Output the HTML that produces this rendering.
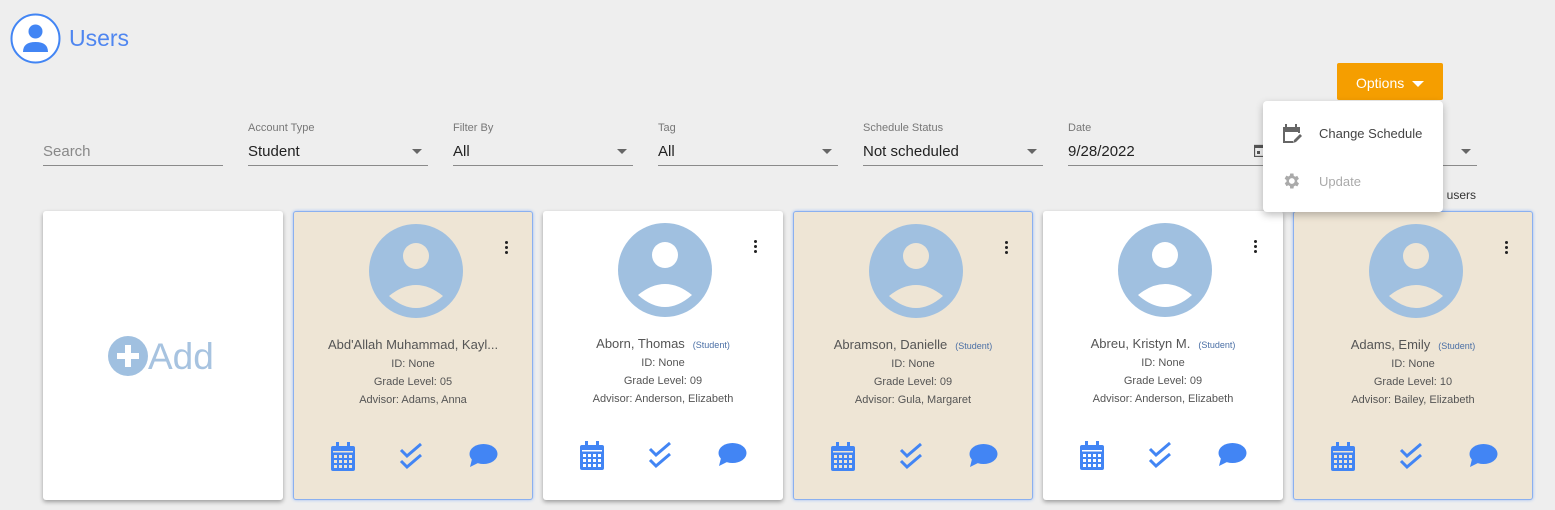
<!DOCTYPE html>
<html><head><style>
body{margin:0;width:1555px;height:510px;background:#eeeeee;font-family:"Liberation Sans",sans-serif;position:relative;overflow:hidden;color:#333}
.abs{position:absolute}
.f{position:absolute;top:118px;height:47px;border-bottom:1px solid #8a8a8a}
.f .l{font-size:11px;color:#777;position:absolute;top:4px;left:0}
.f .v{font-size:15px;color:#222;position:absolute;top:25px;left:0}
.f .a{position:absolute;right:6px;top:31px;width:0;height:0;border-left:5px solid transparent;border-right:5px solid transparent;border-top:5px solid #666}
.card{position:absolute;top:211px;width:240px;height:289px;background:#fff;border-radius:3px;box-shadow:0 2px 4px rgba(0,0,0,.35);box-sizing:border-box}
.tan{background:#eee5d5;border:1px solid #8ab0f0;box-shadow:0 0 3px #9bbcf5}
.av{position:absolute;left:75px;top:12px;width:94px;height:94px}
.dots{position:absolute;left:211px;top:29px;width:3px}
.dots i{display:block;width:3px;height:3px;border-radius:50%;background:#222;margin-bottom:2px}
.txt{position:absolute;left:0;right:0;text-align:center;font-size:11px;color:#555}
.nm{top:125px;font-size:13px;color:#555}
.nm small{font-size:9px;color:#4a6fa5;margin-left:8px}
.ic{position:absolute;top:230px}
</style></head><body>
<svg class="abs" style="left:10px;top:13px" width="51" height="51" viewBox="0 0 51 51"><circle cx="25.5" cy="25.5" r="24" fill="#fff" stroke="#4285f4" stroke-width="2"/><circle cx="25.5" cy="18.5" r="7" fill="#4285f4"/><path d="M13 39 Q13 29 25.5 29 Q38 29 38 39 Z" fill="#4285f4"/></svg>
<div class="abs" style="left:69px;top:25px;font-size:23px;color:#4f86f0">Users</div>
<div class="abs" style="left:1337px;top:63px;width:106px;height:37px;background:#f59e00;border-radius:2px;color:#fff;font-size:14px;line-height:40px;text-align:center">Options &nbsp;<span style="display:inline-block;border-left:6px solid transparent;border-right:6px solid transparent;border-top:6px solid #fff;vertical-align:middle"></span></div>

<div class="f" style="left:43px;width:180px"><div class="v" style="color:#888">Search</div></div>
<div class="f" style="left:248px;width:180px"><div class="l">Account Type</div><div class="v">Student</div><div class="a"></div></div>
<div class="f" style="left:453px;width:180px"><div class="l">Filter By</div><div class="v">All</div><div class="a"></div></div>
<div class="f" style="left:658px;width:180px"><div class="l">Tag</div><div class="v">All</div><div class="a"></div></div>
<div class="f" style="left:863px;width:180px"><div class="l">Schedule Status</div><div class="v">Not scheduled</div><div class="a"></div></div>
<div class="f" style="left:1068px;width:200px"><div class="l">Date</div><div class="v">9/28/2022</div><svg class="abs" style="left:186px;top:26px" width="12" height="13" viewBox="0 0 12 13"><rect x="0.5" y="1.5" width="11" height="11" fill="none" stroke="#555" stroke-width="1.3"/><rect x="0" y="1" width="12" height="3" fill="#555"/><rect x="3" y="7" width="3" height="3" fill="#555"/></svg></div>
<div class="f" style="left:1273px;width:204px"><div class="a"></div></div>
<div class="abs" style="left:1430px;top:188px;font-size:12px;color:#333">36 users</div>

<div class="card" style="left:43px"><svg class="abs" style="left:65px;top:125px" width="40" height="40"><circle cx="20" cy="20" r="20" fill="#a0c0e0"/><rect x="17" y="9" width="6" height="22" fill="#fff"/><rect x="9" y="17" width="22" height="6" fill="#fff"/></svg><div class="abs" style="left:105px;top:125px;font-size:37px;color:#a7c3e0">Add</div></div>

<div class="card tan" style="left:293px">CARD1</div>
<div class="card" style="left:543px">CARD2</div>
<div class="card tan" style="left:793px">CARD3</div>
<div class="card" style="left:1043px">CARD4</div>
<div class="card tan" style="left:1293px">CARD5</div>

<div class="abs" style="left:1263px;top:101px;width:180px;height:111px;background:#fff;border-radius:4px;box-shadow:0 3px 8px rgba(0,0,0,.25)">
<svg class="abs" style="left:18px;top:22px" width="22" height="22" viewBox="0 0 22 22"><path d="M5 1v3M15 1v3" stroke="#666" stroke-width="2"/><path d="M3 4h15v5H3z" fill="#666"/><path d="M3 4v15h9M18 4v6" stroke="#666" stroke-width="2" fill="none"/><path d="M12 20l1-3 6-6 2 2-6 6z" fill="#666"/></svg>
<div class="abs" style="left:56px;top:25px;font-size:13px;color:#444">Change Schedule</div>
<svg class="abs" style="left:18px;top:70px" width="20" height="20" viewBox="0 0 24 24"><path fill="#aaa" d="M19.4 13a7.5 7.5 0 000-2l2.1-1.6-2-3.5-2.5 1a7 7 0 00-1.7-1L15 3h-4l-.4 2.6a7 7 0 00-1.7 1l-2.5-1-2 3.5L6.6 11a7.5 7.5 0 000 2l-2.1 1.6 2 3.5 2.5-1a7 7 0 001.7 1L11 21h4l.4-2.6a7 7 0 001.7-1l2.5 1 2-3.5zM13 15.5a3.5 3.5 0 110-7 3.5 3.5 0 010 7z"/></svg>
<div class="abs" style="left:56px;top:73px;font-size:13px;color:#aaa">Update</div>
</div>
<script>
const d=[["Abd'Allah Muhammad, Kayl...","",'05',"Adams, Anna"],["Aborn, Thomas","(Student)",'09',"Anderson, Elizabeth"],["Abramson, Danielle","(Student)",'09',"Gula, Margaret"],["Abreu, Kristyn M.","(Student)",'09',"Anderson, Elizabeth"],["Adams, Emily","(Student)",'10',"Bailey, Elizabeth"]];
const cards=document.querySelectorAll('.card');
d.forEach((u,i)=>{const c=cards[i+1];const bg=i%2==0?'#eee5d5':'#fff';
c.innerHTML=`<svg class="av" viewBox="0 0 94 94"><circle cx="47" cy="47" r="47" fill="#a0c0e0"/><circle cx="47" cy="32" r="13" fill="${bg}"/><path d="M20 72 Q47 50 74 72 Q47 96 20 72Z" fill="${bg}"/></svg>
<div class="dots"><i></i><i></i><i></i></div>
<div class="txt nm">${u[0]}${u[1]?'<small>'+u[1]+'</small>':''}</div>
<div class="txt" style="top:146px">ID: None</div>
<div class="txt" style="top:164px">Grade Level: ${u[2]}</div>
<div class="txt" style="top:182px">Advisor: ${u[3]}</div>
<svg class="ic" style="left:36px" width="26" height="30" viewBox="0 0 26 30"><rect x="1" y="4" width="24" height="25" rx="2" fill="#4285f4"/><rect x="6" y="0" width="3" height="6" fill="#4285f4"/><rect x="17" y="0" width="3" height="6" fill="#4285f4"/><rect x="3" y="9" width="20" height="1.5" fill="${bg}"/>${[0,1,2].map(r=>[0,1,2,3].map(k=>`<rect x="${4+k*5}" y="${13+r*5}" width="3" height="3" fill="${bg}"/>`).join('')).join('')}</svg>
<svg class="ic" style="left:105px" width="26" height="30" viewBox="0 0 26 30"><path d="M2 8l6 6L22 2M2 19l6 6L22 13" stroke="#4285f4" stroke-width="3" fill="none"/></svg>
<svg class="ic" style="left:174px" width="30" height="28" viewBox="0 0 30 28"><ellipse cx="15.5" cy="12" rx="14" ry="10" fill="#4285f4"/><path d="M4 17l-2 8 8-4z" fill="#4285f4"/></svg>`;});
</script>
</body></html>
